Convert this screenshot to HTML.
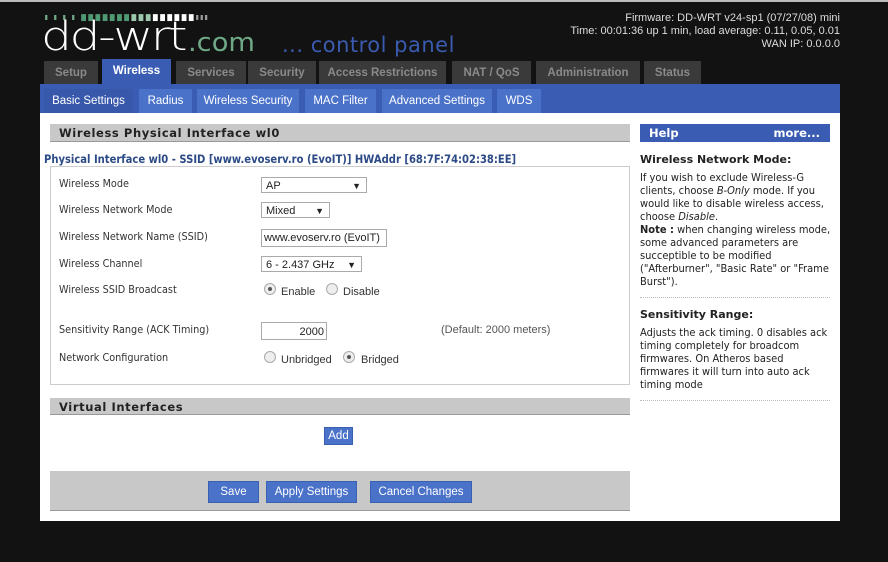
<!DOCTYPE html>
<html><head><meta charset="utf-8"><style>
body{margin:0;width:888px;height:562px;background:#121212;position:relative;overflow:hidden;font-family:"DejaVu Sans","Liberation Sans",sans-serif;}
.a{position:absolute;white-space:nowrap}
.tab{position:absolute;top:61px;height:23px;background:#3a3a3a;color:#8a8a8a;font-size:11.5px;font-weight:bold;text-align:center;line-height:24px;font-family:"Liberation Sans",sans-serif}
.sub{position:absolute;top:89px;height:24px;background:#4a72c9;color:#fff;font-size:11.5px;text-align:center;line-height:25px;font-family:"Liberation Sans",sans-serif}
.lbl{position:absolute;left:59px;font-size:11px;color:#333;font-family:"DejaVu Sans",sans-serif;transform:scaleX(.88);transform-origin:left}
.sel{position:absolute;left:261px;height:16px;border:1px solid #aaa;background:#fff;font-size:11px;line-height:16px;padding-left:4px;box-sizing:border-box;font-family:"Liberation Sans",sans-serif;color:#222}
.sel b{position:absolute;right:5px;top:0;font-size:9px}
.rad{position:absolute;width:10px;height:10px;border-radius:50%;border:1px solid #aaa;background:#eee}
.rad.on::after{content:"";position:absolute;left:3px;top:3px;width:4px;height:4px;border-radius:50%;background:#555}
.rt{position:absolute;font-size:11px;color:#333;font-family:"Liberation Sans",sans-serif}
.btn{position:absolute;background:#4a72c9;color:#fff;font-size:11.5px;text-align:center;font-family:"Liberation Sans",sans-serif;border:1px solid #3a60b0;box-sizing:border-box}
.hd{position:absolute;background:#c8c8c8;border-bottom:1px solid #999;font-weight:bold;font-size:11.5px;color:#222;letter-spacing:.6px}
.help{position:absolute;left:640px;font-size:11px;color:#222;line-height:13px;width:195px;font-family:"DejaVu Sans",sans-serif}
</style></head><body>
<div class="a" style="left:0;top:0;width:888px;height:2px;background:#bbb"></div>
<!-- logo -->
<div class="a" style="left:44px;top:13px;font-size:9px;letter-spacing:0px;color:#6fa886;font-weight:bold;transform:scaleX(1.45);transform-origin:left">ı ı ı ı <span style="color:#4f9a74">▮▮▮▮▮▮▮</span><span style="color:#9ec8ad">▮▮▮</span><span style="color:#fff">▮▮▮▮▮▮</span><span style="color:#999">ııı</span></div>
<div class="a" style="left:41px;top:17px;font-size:40px;color:#fff;font-family:'DejaVu Sans',sans-serif;letter-spacing:-2px;line-height:40px;font-weight:200;transform:scaleX(1.22);transform-origin:left">dd-wrt</div>
<div class="a" style="left:188px;top:28px;font-size:26px;color:#6fa886;line-height:30px;transform:scaleX(1.05);transform-origin:left">.com</div>
<div class="a" style="left:282px;top:33px;font-size:21px;color:#3a5bb0;line-height:24px;letter-spacing:.5px">... control panel</div>
<div class="a" style="right:48px;top:12px;font-size:11px;color:#ddd;text-align:right;line-height:13px;font-family:'Liberation Sans',sans-serif">Firmware: DD-WRT v24-sp1 (07/27/08) mini<br>Time: 00:01:36 up 1 min, load average: 0.11, 0.05, 0.01<br>WAN IP: 0.0.0.0</div>
<!-- tabs -->
<div class="tab" style="left:44px;width:54px">Setup</div>
<div class="tab" style="left:102px;width:69px;top:59px;height:26px;background:#3a5db3;color:#fff;line-height:24px">Wireless</div>
<div class="tab" style="left:176px;width:70px">Services</div>
<div class="tab" style="left:248px;width:68px">Security</div>
<div class="tab" style="left:319px;width:127px">Access Restrictions</div>
<div class="tab" style="left:452px;width:79px">NAT / QoS</div>
<div class="tab" style="left:536px;width:104px">Administration</div>
<div class="tab" style="left:644px;width:57px">Status</div>
<div class="a" style="left:40px;top:84px;width:800px;height:29px;background:#3a5db3"></div>
<div class="sub" style="left:44px;width:89px;background:#3858ab">Basic Settings</div>
<div class="sub" style="left:139px;width:53px">Radius</div>
<div class="sub" style="left:197px;width:102px">Wireless Security</div>
<div class="sub" style="left:305px;width:71px">MAC Filter</div>
<div class="sub" style="left:382px;width:110px">Advanced Settings</div>
<div class="sub" style="left:497px;width:44px">WDS</div>
<div class="a" style="left:40px;top:113px;width:800px;height:408px;background:#fff"></div>
<!-- section -->
<div class="hd" style="left:50px;top:124px;width:580px;height:18px;line-height:19px;padding-left:9px;box-sizing:border-box">Wireless Physical Interface wl0</div>
<div class="a" style="left:50px;top:166px;width:578px;height:217px;border:1px solid #ccc"></div>
<div class="a" style="left:44px;top:152px;background:#fff;padding-right:6px;font-size:11.5px;font-weight:bold;color:#2c4a86;font-family:'DejaVu Sans',sans-serif;transform:scaleX(.87);transform-origin:left">Physical Interface wl0 - SSID [www.evoserv.ro (EvoIT)] HWAddr [68:7F:74:02:38:EE]</div>
<div class="lbl" style="top:177px">Wireless Mode</div>
<div class="sel" style="top:177px;width:106px">AP<b>▼</b></div>
<div class="lbl" style="top:203px">Wireless Network Mode</div>
<div class="sel" style="top:202px;width:69px">Mixed<b>▼</b></div>
<div class="lbl" style="top:230px">Wireless Network Name (SSID)</div>
<div class="sel" style="top:229px;width:126px;height:18px;padding-left:2px;line-height:17px">www.evoserv.ro (EvoIT)</div>
<div class="lbl" style="top:257px">Wireless Channel</div>
<div class="sel" style="top:256px;width:101px">6 - 2.437 GHz<b>▼</b></div>
<div class="lbl" style="top:283px">Wireless SSID Broadcast</div>
<div class="rad on" style="left:264px;top:283px"></div><div class="rt" style="left:281px;top:286px">Enable</div>
<div class="rad" style="left:326px;top:283px"></div><div class="rt" style="left:343px;top:286px">Disable</div>
<div class="lbl" style="top:323px">Sensitivity Range (ACK Timing)</div>
<div class="sel" style="top:322px;width:66px;height:18px;text-align:right;padding-right:2px;line-height:18px">2000</div>
<div class="rt" style="left:441px;top:324px;color:#555">(Default: 2000 meters)</div>
<div class="lbl" style="top:351px">Network Configuration</div>
<div class="rad" style="left:264px;top:351px"></div><div class="rt" style="left:281px;top:354px">Unbridged</div>
<div class="rad on" style="left:343px;top:351px"></div><div class="rt" style="left:361px;top:354px">Bridged</div>
<div class="hd" style="left:50px;top:398px;width:580px;height:17px;line-height:18px;padding-left:9px;box-sizing:border-box">Virtual Interfaces</div>
<div class="btn" style="left:324px;top:427px;width:29px;height:18px;line-height:17px">Add</div>
<div class="a" style="left:50px;top:471px;width:580px;height:39px;background:#c8c8c8;border-bottom:1px solid #999"></div>
<div class="btn" style="left:208px;top:481px;width:51px;height:22px;line-height:21px">Save</div>
<div class="btn" style="left:266px;top:481px;width:91px;height:22px;line-height:21px">Apply Settings</div>
<div class="btn" style="left:370px;top:481px;width:102px;height:22px;line-height:21px">Cancel Changes</div>
<!-- help -->
<div class="a" style="left:640px;top:124px;width:190px;height:18px;background:#3a5db3;color:#fff;font-size:11.5px;font-weight:bold;line-height:19px"><span style="margin-left:9px">Help</span><span style="position:absolute;right:10px">more...</span></div>
<div class="help" style="top:153px"><b>Wireless Network Mode:</b></div>
<div class="help" style="top:171px;transform:scaleX(.9);transform-origin:left;width:215px">If you wish to exclude Wireless-G clients, choose <i>B-Only</i> mode. If you would like to disable wireless access, choose <i>Disable</i>.<br><b>Note :</b> when changing wireless mode, some advanced parameters are succeptible to be modified ("Afterburner", "Basic Rate" or "Frame Burst").</div>
<div class="a" style="left:640px;top:297px;width:190px;border-top:1px dotted #bbb"></div>
<div class="help" style="top:308px"><b>Sensitivity Range:</b></div>
<div class="help" style="top:326px;transform:scaleX(.9);transform-origin:left;width:215px">Adjusts the ack timing. 0 disables ack timing completely for broadcom firmwares. On Atheros based firmwares it will turn into auto ack timing mode</div>
<div class="a" style="left:640px;top:400px;width:190px;border-top:1px dotted #bbb"></div>
</body></html>
